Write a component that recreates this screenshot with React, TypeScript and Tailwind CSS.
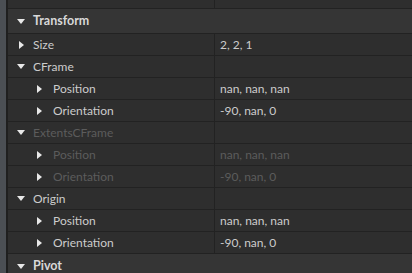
import React from "react";

type Row = {
  label: string;
  value?: string;
  depth: number;
  open?: boolean;
  disabled?: boolean;
  header?: boolean;
};

const rows: Row[] = [
  { label: "Transform", depth: 0, open: true, header: true },
  { label: "Size", value: "2, 2, 1", depth: 0, open: false },
  { label: "CFrame", depth: 0, open: true },
  { label: "Position", value: "nan, nan, nan", depth: 1, open: false },
  { label: "Orientation", value: "-90, nan, 0", depth: 1, open: false },
  { label: "ExtentsCFrame", depth: 0, open: true, disabled: true },
  { label: "Position", value: "nan, nan, nan", depth: 1, open: false, disabled: true },
  { label: "Orientation", value: "-90, nan, 0", depth: 1, open: false, disabled: true },
  { label: "Origin", depth: 0, open: true },
  { label: "Position", value: "nan, nan, nan", depth: 1, open: false },
  { label: "Orientation", value: "-90, nan, 0", depth: 1, open: false },
];

const Arrow = ({ open }: { open?: boolean }) =>
  open ? (
    <svg width="8" height="5" viewBox="0 0 8 5" className="shrink-0">
      <path d="M0 0 L8 0 L4 5 Z" fill="#e8e8e8" />
    </svg>
  ) : (
    <svg width="5" height="8" viewBox="0 0 5 8" className="shrink-0">
      <path d="M0 0 L5 4 L0 8 Z" fill="#e8e8e8" />
    </svg>
  );

const PropRow = ({ row }: { row: Row }) => {
  const text = row.disabled ? "text-[#5c5c5c]" : "text-[#cccccc]";
  if (row.header) {
    return (
      <div className="flex h-[25px] shrink-0 items-center border-b border-[#222222] bg-[#353535]">
        <div className="flex w-[25px] justify-center pl-[1px]">
          <Arrow open={row.open} />
        </div>
        <span className="text-[12.5px] font-bold text-[#d8d8d8]">{row.label}</span>
      </div>
    );
  }
  return (
    <div className="flex h-[22px] shrink-0 border-b border-[#222222] bg-[#2e2e2e]">
      <div className="flex w-[207px] items-center border-r border-[#222222]">
        <div className={row.depth ? "flex w-[45px] justify-end pr-[11px]" : "flex w-[25px] justify-center pl-[1px]"}>
          <Arrow open={row.open} />
        </div>
        <span className={`text-[12px] ${text}`}>{row.label}</span>
      </div>
      <div className={`flex flex-1 items-center pl-[5px] text-[12px] ${text}`}>{row.value}</div>
    </div>
  );
};

export default function App() {
  return (
    <div
      className="flex h-[273px] w-[412px] overflow-hidden bg-[#2e2e2e]"
      style={{ fontFamily: 'Lato, "Noto Sans", sans-serif' }}
    >
      <div className="w-[6px] bg-[#4b4f54]" />
      <div className="w-[2px] bg-[#1f1f1f]" />
      <div className="flex flex-1 flex-col">
        <div className="flex h-[9px] shrink-0 border-b border-[#222222] bg-[#2e2e2e]">
          <div className="w-[207px] border-r border-[#222222]" />
        </div>
        {rows.map((r, i) => (
          <PropRow key={i} row={r} />
        ))}
        <div className="flex h-[25px] shrink-0 items-center bg-[#353535]">
          <div className="flex w-[25px] justify-center pl-[1px]">
            <Arrow open />
          </div>
          <span className="text-[12.5px] font-bold text-[#d8d8d8]">Pivot</span>
        </div>
      </div>
    </div>
  );
}
